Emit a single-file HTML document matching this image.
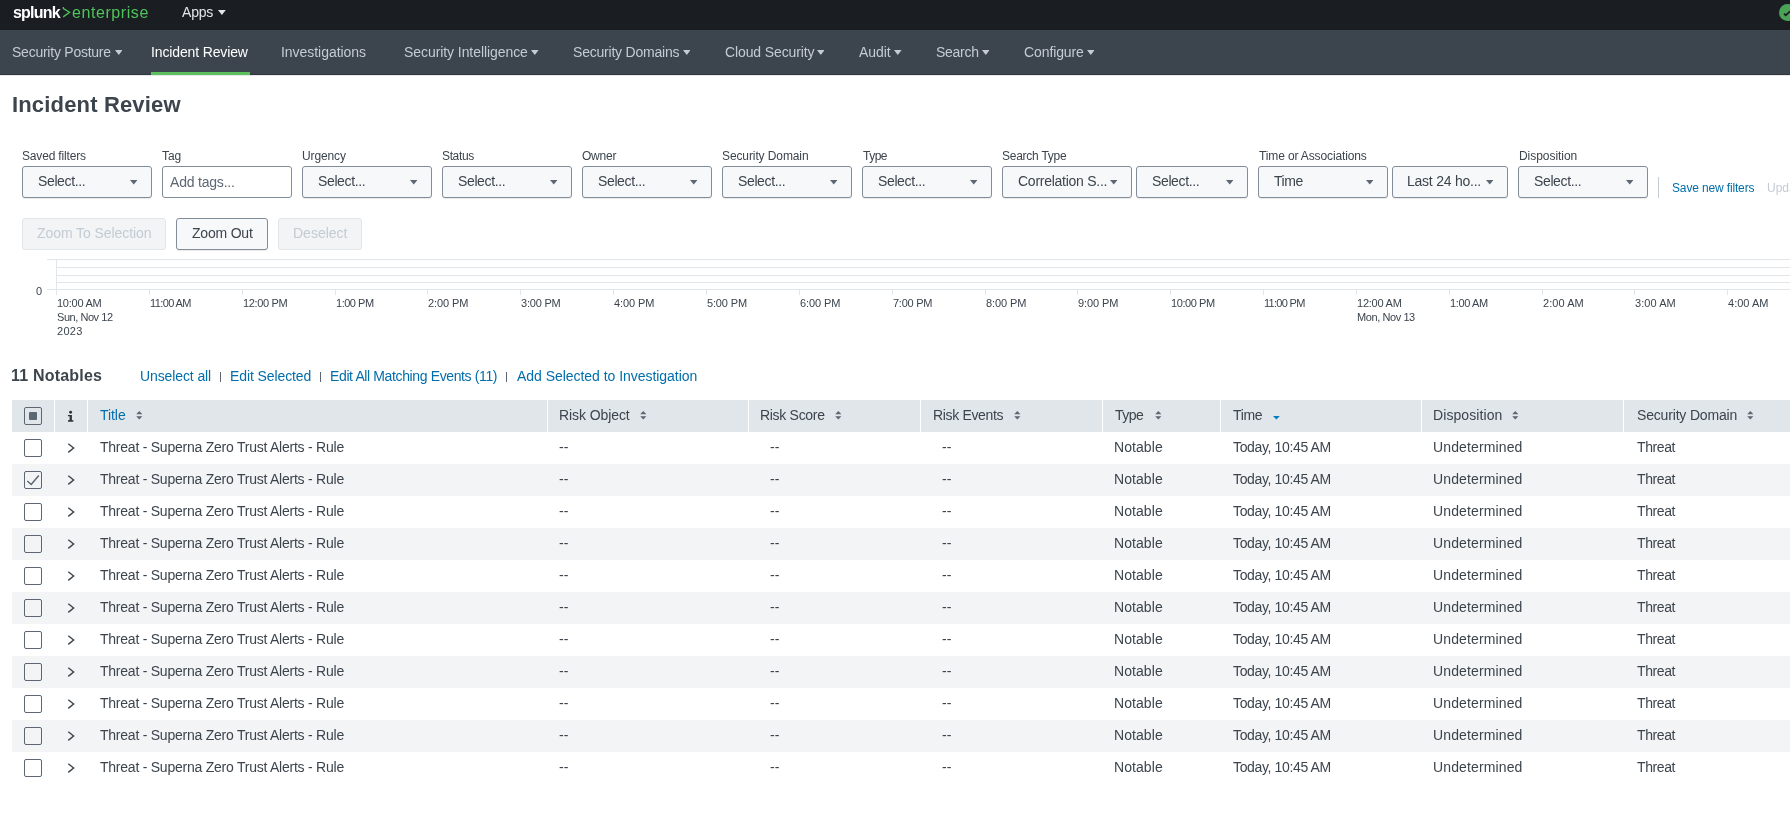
<!DOCTYPE html>
<html><head><meta charset="utf-8"><style>
html,body{margin:0;padding:0;width:1790px;height:838px;overflow:hidden;background:#ffffff;}
body{position:relative;font-family:"Liberation Sans",sans-serif;}
.t{position:absolute;white-space:nowrap;-webkit-font-smoothing:antialiased;will-change:transform;}
.r{position:absolute;box-sizing:content-box;}
</style></head><body>
<div class="r" style="left:0px;top:0px;width:1790px;height:30px;background:#1a1e22"></div>
<div class="t" style="left:12.90px;top:5px;font-size:16px;line-height:16px;color:#ffffff;font-weight:700;letter-spacing:-0.793px;">splunk</div>
<svg class="r" style="left:60px;top:4px" width="14" height="16" viewBox="60 4 14 16"><path d="M63.4 7 L63.4 8.6 L69.6 12.3 L63.2 16.9" stroke="#4fc35a" stroke-width="1.3" fill="none"/></svg>
<div class="t" style="left:71.60px;top:5px;font-size:16px;line-height:16px;color:#4fc35a;font-weight:400;letter-spacing:0.572px;">enterprise</div>
<div class="t" style="left:181.90px;top:5px;font-size:14px;line-height:14px;color:#e1e6eb;font-weight:400;letter-spacing:-0.203px;">Apps</div>
<svg class="r" style="left:218.3px;top:10px" width="7.8" height="5" viewBox="0 0 7.8 5"><path d="M0 0 L7.8 0 L3.9 5 Z" fill="#e1e6eb"/></svg>
<div class="r" style="left:1779px;top:4px;width:17px;height:17px;border-radius:50%;background:#4aa356"></div>
<svg class="r" style="left:1780px;top:8px" width="10" height="10" viewBox="1780 8 10 10"><path d="M1784 13.6 L1785.8 15.3 L1790 11.3" stroke="#1a1c20" stroke-width="1.8" fill="none"/></svg>
<div class="r" style="left:0px;top:30px;width:1790px;height:45px;background:#3c444d"></div>
<div class="r" style="left:0px;top:74px;width:1790px;height:1px;background:#2f363e"></div>
<div class="r" style="left:0px;top:75px;width:1790px;height:1px;background:#e6e8ea"></div>
<div class="t" style="left:12.20px;top:45px;font-size:14px;line-height:14px;color:#c3cbd4;font-weight:400;letter-spacing:-0.242px;">Security Posture</div>
<svg class="r" style="left:114.8px;top:50px" width="7.6" height="5" viewBox="0 0 7.6 5"><path d="M0 0 L7.6 0 L3.8 5 Z" fill="#c3cbd4"/></svg>
<div class="t" style="left:150.70px;top:45px;font-size:14px;line-height:14px;color:#ffffff;font-weight:400;letter-spacing:-0.137px;">Incident Review</div>
<div class="t" style="left:280.60px;top:45px;font-size:14px;line-height:14px;color:#c3cbd4;font-weight:400;letter-spacing:-0.039px;">Investigations</div>
<div class="t" style="left:403.90px;top:45px;font-size:14px;line-height:14px;color:#c3cbd4;font-weight:400;letter-spacing:-0.070px;">Security Intelligence</div>
<svg class="r" style="left:531px;top:50px" width="7.6" height="5" viewBox="0 0 7.6 5"><path d="M0 0 L7.6 0 L3.8 5 Z" fill="#c3cbd4"/></svg>
<div class="t" style="left:573.00px;top:45px;font-size:14px;line-height:14px;color:#c3cbd4;font-weight:400;letter-spacing:-0.207px;">Security Domains</div>
<svg class="r" style="left:682.7px;top:50px" width="7.6" height="5" viewBox="0 0 7.6 5"><path d="M0 0 L7.6 0 L3.8 5 Z" fill="#c3cbd4"/></svg>
<div class="t" style="left:724.80px;top:45px;font-size:14px;line-height:14px;color:#c3cbd4;font-weight:400;letter-spacing:-0.119px;">Cloud Security</div>
<svg class="r" style="left:816.7px;top:50px" width="7.6" height="5" viewBox="0 0 7.6 5"><path d="M0 0 L7.6 0 L3.8 5 Z" fill="#c3cbd4"/></svg>
<div class="t" style="left:859.30px;top:45px;font-size:14px;line-height:14px;color:#c3cbd4;font-weight:400;letter-spacing:-0.080px;">Audit</div>
<svg class="r" style="left:894px;top:50px" width="7.6" height="5" viewBox="0 0 7.6 5"><path d="M0 0 L7.6 0 L3.8 5 Z" fill="#c3cbd4"/></svg>
<div class="t" style="left:936.10px;top:45px;font-size:14px;line-height:14px;color:#c3cbd4;font-weight:400;letter-spacing:-0.274px;">Search</div>
<svg class="r" style="left:981.5px;top:50px" width="7.6" height="5" viewBox="0 0 7.6 5"><path d="M0 0 L7.6 0 L3.8 5 Z" fill="#c3cbd4"/></svg>
<div class="t" style="left:1023.80px;top:45px;font-size:14px;line-height:14px;color:#c3cbd4;font-weight:400;letter-spacing:-0.102px;">Configure</div>
<svg class="r" style="left:1086.9px;top:50px" width="7.6" height="5" viewBox="0 0 7.6 5"><path d="M0 0 L7.6 0 L3.8 5 Z" fill="#c3cbd4"/></svg>
<div class="r" style="left:151px;top:72px;width:99px;height:3px;background:#5cc05c"></div>
<div class="t" style="left:11.60px;top:94px;font-size:22px;line-height:22px;color:#3c444d;font-weight:700;letter-spacing:0.160px;">Incident Review</div>
<div class="t" style="left:22.30px;top:150px;font-size:12px;line-height:12px;color:#3c444d;font-weight:400;letter-spacing:-0.169px;">Saved filters</div>
<div class="t" style="left:162.10px;top:150px;font-size:12px;line-height:12px;color:#3c444d;font-weight:400;letter-spacing:-0.037px;">Tag</div>
<div class="t" style="left:302.10px;top:150px;font-size:12px;line-height:12px;color:#3c444d;font-weight:400;letter-spacing:-0.114px;">Urgency</div>
<div class="t" style="left:442.00px;top:150px;font-size:12px;line-height:12px;color:#3c444d;font-weight:400;letter-spacing:-0.364px;">Status</div>
<div class="t" style="left:582.40px;top:150px;font-size:12px;line-height:12px;color:#3c444d;font-weight:400;letter-spacing:-0.237px;">Owner</div>
<div class="t" style="left:721.90px;top:150px;font-size:12px;line-height:12px;color:#3c444d;font-weight:400;letter-spacing:-0.104px;">Security Domain</div>
<div class="t" style="left:862.60px;top:150px;font-size:12px;line-height:12px;color:#3c444d;font-weight:400;letter-spacing:-0.514px;">Type</div>
<div class="t" style="left:1002.30px;top:150px;font-size:12px;line-height:12px;color:#3c444d;font-weight:400;letter-spacing:-0.250px;">Search Type</div>
<div class="t" style="left:1258.80px;top:150px;font-size:12px;line-height:12px;color:#3c444d;font-weight:400;letter-spacing:-0.128px;">Time or Associations</div>
<div class="t" style="left:1518.90px;top:150px;font-size:12px;line-height:12px;color:#3c444d;font-weight:400;letter-spacing:-0.042px;">Disposition</div>
<div class="r" style="left:22px;top:166px;width:128px;height:30px;background:#f7f8fa;border:1px solid #818d99;border-radius:3px;box-shadow:0 1px 0 rgba(0,0,0,0.08)"></div>
<div class="t" style="left:37.50px;top:174px;font-size:14px;line-height:14px;color:#3c444d;font-weight:400;letter-spacing:-0.374px;">Select...</div>
<svg class="r" style="left:129.7px;top:180px" width="7.5" height="4.6" viewBox="0 0 7.5 4.6"><path d="M0 0 L7.5 0 L3.75 4.6 Z" fill="#5c6773"/></svg>
<div class="r" style="left:302px;top:166px;width:128px;height:30px;background:#f7f8fa;border:1px solid #818d99;border-radius:3px;box-shadow:0 1px 0 rgba(0,0,0,0.08)"></div>
<div class="t" style="left:317.50px;top:174px;font-size:14px;line-height:14px;color:#3c444d;font-weight:400;letter-spacing:-0.374px;">Select...</div>
<svg class="r" style="left:409.7px;top:180px" width="7.5" height="4.6" viewBox="0 0 7.5 4.6"><path d="M0 0 L7.5 0 L3.75 4.6 Z" fill="#5c6773"/></svg>
<div class="r" style="left:442px;top:166px;width:128px;height:30px;background:#f7f8fa;border:1px solid #818d99;border-radius:3px;box-shadow:0 1px 0 rgba(0,0,0,0.08)"></div>
<div class="t" style="left:457.50px;top:174px;font-size:14px;line-height:14px;color:#3c444d;font-weight:400;letter-spacing:-0.374px;">Select...</div>
<svg class="r" style="left:549.7px;top:180px" width="7.5" height="4.6" viewBox="0 0 7.5 4.6"><path d="M0 0 L7.5 0 L3.75 4.6 Z" fill="#5c6773"/></svg>
<div class="r" style="left:582px;top:166px;width:128px;height:30px;background:#f7f8fa;border:1px solid #818d99;border-radius:3px;box-shadow:0 1px 0 rgba(0,0,0,0.08)"></div>
<div class="t" style="left:597.50px;top:174px;font-size:14px;line-height:14px;color:#3c444d;font-weight:400;letter-spacing:-0.374px;">Select...</div>
<svg class="r" style="left:689.7px;top:180px" width="7.5" height="4.6" viewBox="0 0 7.5 4.6"><path d="M0 0 L7.5 0 L3.75 4.6 Z" fill="#5c6773"/></svg>
<div class="r" style="left:722px;top:166px;width:128px;height:30px;background:#f7f8fa;border:1px solid #818d99;border-radius:3px;box-shadow:0 1px 0 rgba(0,0,0,0.08)"></div>
<div class="t" style="left:737.50px;top:174px;font-size:14px;line-height:14px;color:#3c444d;font-weight:400;letter-spacing:-0.374px;">Select...</div>
<svg class="r" style="left:829.7px;top:180px" width="7.5" height="4.6" viewBox="0 0 7.5 4.6"><path d="M0 0 L7.5 0 L3.75 4.6 Z" fill="#5c6773"/></svg>
<div class="r" style="left:862px;top:166px;width:128px;height:30px;background:#f7f8fa;border:1px solid #818d99;border-radius:3px;box-shadow:0 1px 0 rgba(0,0,0,0.08)"></div>
<div class="t" style="left:877.50px;top:174px;font-size:14px;line-height:14px;color:#3c444d;font-weight:400;letter-spacing:-0.374px;">Select...</div>
<svg class="r" style="left:969.7px;top:180px" width="7.5" height="4.6" viewBox="0 0 7.5 4.6"><path d="M0 0 L7.5 0 L3.75 4.6 Z" fill="#5c6773"/></svg>
<div class="r" style="left:1002px;top:166px;width:128px;height:30px;background:#f7f8fa;border:1px solid #818d99;border-radius:3px;box-shadow:0 1px 0 rgba(0,0,0,0.08)"></div>
<div class="t" style="left:1017.50px;top:174px;font-size:14px;line-height:14px;color:#3c444d;font-weight:400;letter-spacing:-0.259px;">Correlation S...</div>
<svg class="r" style="left:1109.7px;top:180px" width="7.5" height="4.6" viewBox="0 0 7.5 4.6"><path d="M0 0 L7.5 0 L3.75 4.6 Z" fill="#5c6773"/></svg>
<div class="r" style="left:1136px;top:166px;width:110px;height:30px;background:#f7f8fa;border:1px solid #818d99;border-radius:3px;box-shadow:0 1px 0 rgba(0,0,0,0.08)"></div>
<div class="t" style="left:1151.50px;top:174px;font-size:14px;line-height:14px;color:#3c444d;font-weight:400;letter-spacing:-0.374px;">Select...</div>
<svg class="r" style="left:1225.7px;top:180px" width="7.5" height="4.6" viewBox="0 0 7.5 4.6"><path d="M0 0 L7.5 0 L3.75 4.6 Z" fill="#5c6773"/></svg>
<div class="r" style="left:1258px;top:166px;width:128px;height:30px;background:#f7f8fa;border:1px solid #818d99;border-radius:3px;box-shadow:0 1px 0 rgba(0,0,0,0.08)"></div>
<div class="t" style="left:1273.50px;top:174px;font-size:14px;line-height:14px;color:#3c444d;font-weight:400;letter-spacing:-0.435px;">Time</div>
<svg class="r" style="left:1365.7px;top:180px" width="7.5" height="4.6" viewBox="0 0 7.5 4.6"><path d="M0 0 L7.5 0 L3.75 4.6 Z" fill="#5c6773"/></svg>
<div class="r" style="left:1392px;top:166px;width:114px;height:30px;background:#f7f8fa;border:1px solid #818d99;border-radius:3px;box-shadow:0 1px 0 rgba(0,0,0,0.08)"></div>
<div class="t" style="left:1406.50px;top:174px;font-size:14px;line-height:14px;color:#3c444d;font-weight:400;letter-spacing:-0.239px;">Last 24 ho...</div>
<svg class="r" style="left:1485.7px;top:180px" width="7.5" height="4.6" viewBox="0 0 7.5 4.6"><path d="M0 0 L7.5 0 L3.75 4.6 Z" fill="#5c6773"/></svg>
<div class="r" style="left:1518px;top:166px;width:128px;height:30px;background:#f7f8fa;border:1px solid #818d99;border-radius:3px;box-shadow:0 1px 0 rgba(0,0,0,0.08)"></div>
<div class="t" style="left:1533.50px;top:174px;font-size:14px;line-height:14px;color:#3c444d;font-weight:400;letter-spacing:-0.374px;">Select...</div>
<svg class="r" style="left:1625.7px;top:180px" width="7.5" height="4.6" viewBox="0 0 7.5 4.6"><path d="M0 0 L7.5 0 L3.75 4.6 Z" fill="#5c6773"/></svg>
<div class="r" style="left:162px;top:166px;width:128px;height:30px;background:#ffffff;border:1px solid #818d99;border-radius:3px"></div>
<div class="t" style="left:170.20px;top:175px;font-size:14px;line-height:14px;color:#5c6773;font-weight:400;letter-spacing:-0.204px;">Add tags...</div>
<div class="r" style="left:1658px;top:177px;width:1px;height:21px;background:#c3cbd4"></div>
<div class="t" style="left:1671.70px;top:182px;font-size:12px;line-height:12px;color:#006eaa;font-weight:400;letter-spacing:-0.147px;">Save new filters</div>
<div class="t" style="left:1767.00px;top:182px;font-size:12px;line-height:12px;color:#c3cbd4;font-weight:400;">Update</div>
<div class="r" style="left:22px;top:218px;width:142px;height:30px;background:#f2f4f5;border:1px solid #e1e6eb;border-radius:3px"></div>
<div class="t" style="left:36.90px;top:226px;font-size:14px;line-height:14px;color:#c3cbd4;font-weight:400;letter-spacing:-0.072px;">Zoom To Selection</div>
<div class="r" style="left:176px;top:218px;width:90px;height:30px;background:#f7f8fa;border:1px solid #818d99;border-radius:3px;box-shadow:0 1px 0 rgba(0,0,0,0.08)"></div>
<div class="t" style="left:191.80px;top:226px;font-size:14px;line-height:14px;color:#3c444d;font-weight:400;letter-spacing:-0.207px;">Zoom Out</div>
<div class="r" style="left:278px;top:218px;width:82px;height:30px;background:#f2f4f5;border:1px solid #e1e6eb;border-radius:3px"></div>
<div class="t" style="left:292.50px;top:226px;font-size:14px;line-height:14px;color:#c3cbd4;font-weight:400;letter-spacing:0.003px;">Deselect</div>
<div class="r" style="left:47px;top:259px;width:1743px;height:1px;background:#e1e6eb"></div>
<div class="r" style="left:56px;top:267px;width:1734px;height:1px;background:#e1e6eb"></div>
<div class="r" style="left:56px;top:275px;width:1734px;height:1px;background:#e1e6eb"></div>
<div class="r" style="left:56px;top:282px;width:1734px;height:1px;background:#e1e6eb"></div>
<div class="r" style="left:47px;top:289px;width:1743px;height:1px;background:#e1e6eb"></div>
<div class="r" style="left:56px;top:259px;width:1px;height:36px;background:#e1e6eb"></div>
<div class="t" style="left:35.60px;top:286px;font-size:11px;line-height:11px;color:#3c444d;font-weight:400;">0</div>
<div class="t" style="left:57.00px;top:298px;font-size:11px;line-height:11px;color:#3c444d;font-weight:400;letter-spacing:-0.246px;">10:00 AM</div>
<div class="r" style="left:149px;top:289px;width:1px;height:6px;background:#e1e6eb"></div>
<div class="t" style="left:149.80px;top:298px;font-size:11px;line-height:11px;color:#3c444d;font-weight:400;letter-spacing:-0.601px;">11:00 AM</div>
<div class="r" style="left:242px;top:289px;width:1px;height:6px;background:#e1e6eb"></div>
<div class="t" style="left:242.70px;top:298px;font-size:11px;line-height:11px;color:#3c444d;font-weight:400;letter-spacing:-0.331px;">12:00 PM</div>
<div class="r" style="left:335px;top:289px;width:1px;height:6px;background:#e1e6eb"></div>
<div class="t" style="left:335.50px;top:298px;font-size:11px;line-height:11px;color:#3c444d;font-weight:400;letter-spacing:-0.484px;">1:00 PM</div>
<div class="r" style="left:427px;top:289px;width:1px;height:6px;background:#e1e6eb"></div>
<div class="t" style="left:428.40px;top:298px;font-size:11px;line-height:11px;color:#3c444d;font-weight:400;letter-spacing:-0.100px;">2:00 PM</div>
<div class="r" style="left:520px;top:289px;width:1px;height:6px;background:#e1e6eb"></div>
<div class="t" style="left:521.20px;top:298px;font-size:11px;line-height:11px;color:#3c444d;font-weight:400;letter-spacing:-0.200px;">3:00 PM</div>
<div class="r" style="left:613px;top:289px;width:1px;height:6px;background:#e1e6eb"></div>
<div class="t" style="left:614.10px;top:298px;font-size:11px;line-height:11px;color:#3c444d;font-weight:400;letter-spacing:-0.100px;">4:00 PM</div>
<div class="r" style="left:706px;top:289px;width:1px;height:6px;background:#e1e6eb"></div>
<div class="t" style="left:706.90px;top:298px;font-size:11px;line-height:11px;color:#3c444d;font-weight:400;letter-spacing:-0.150px;">5:00 PM</div>
<div class="r" style="left:799px;top:289px;width:1px;height:6px;background:#e1e6eb"></div>
<div class="t" style="left:799.80px;top:298px;font-size:11px;line-height:11px;color:#3c444d;font-weight:400;letter-spacing:-0.100px;">6:00 PM</div>
<div class="r" style="left:892px;top:289px;width:1px;height:6px;background:#e1e6eb"></div>
<div class="t" style="left:892.60px;top:298px;font-size:11px;line-height:11px;color:#3c444d;font-weight:400;letter-spacing:-0.267px;">7:00 PM</div>
<div class="r" style="left:985px;top:289px;width:1px;height:6px;background:#e1e6eb"></div>
<div class="t" style="left:985.50px;top:298px;font-size:11px;line-height:11px;color:#3c444d;font-weight:400;letter-spacing:-0.100px;">8:00 PM</div>
<div class="r" style="left:1077px;top:289px;width:1px;height:6px;background:#e1e6eb"></div>
<div class="t" style="left:1078.30px;top:298px;font-size:11px;line-height:11px;color:#3c444d;font-weight:400;letter-spacing:-0.100px;">9:00 PM</div>
<div class="r" style="left:1170px;top:289px;width:1px;height:6px;background:#e1e6eb"></div>
<div class="t" style="left:1171.20px;top:298px;font-size:11px;line-height:11px;color:#3c444d;font-weight:400;letter-spacing:-0.417px;">10:00 PM</div>
<div class="r" style="left:1263px;top:289px;width:1px;height:6px;background:#e1e6eb"></div>
<div class="t" style="left:1264.00px;top:298px;font-size:11px;line-height:11px;color:#3c444d;font-weight:400;letter-spacing:-0.701px;">11:00 PM</div>
<div class="r" style="left:1356px;top:289px;width:1px;height:6px;background:#e1e6eb"></div>
<div class="t" style="left:1356.90px;top:298px;font-size:11px;line-height:11px;color:#3c444d;font-weight:400;letter-spacing:-0.231px;">12:00 AM</div>
<div class="r" style="left:1449px;top:289px;width:1px;height:6px;background:#e1e6eb"></div>
<div class="t" style="left:1449.80px;top:298px;font-size:11px;line-height:11px;color:#3c444d;font-weight:400;letter-spacing:-0.367px;">1:00 AM</div>
<div class="r" style="left:1542px;top:289px;width:1px;height:6px;background:#e1e6eb"></div>
<div class="t" style="left:1542.60px;top:298px;font-size:11px;line-height:11px;color:#3c444d;font-weight:400;letter-spacing:0.066px;">2:00 AM</div>
<div class="r" style="left:1634px;top:289px;width:1px;height:6px;background:#e1e6eb"></div>
<div class="t" style="left:1635.40px;top:298px;font-size:11px;line-height:11px;color:#3c444d;font-weight:400;letter-spacing:0.066px;">3:00 AM</div>
<div class="r" style="left:1727px;top:289px;width:1px;height:6px;background:#e1e6eb"></div>
<div class="t" style="left:1728.30px;top:298px;font-size:11px;line-height:11px;color:#3c444d;font-weight:400;letter-spacing:0.016px;">4:00 AM</div>
<div class="t" style="left:57.00px;top:312px;font-size:11px;line-height:11px;color:#3c444d;font-weight:400;letter-spacing:-0.452px;">Sun, Nov 12</div>
<div class="t" style="left:57.00px;top:326px;font-size:11px;line-height:11px;color:#3c444d;font-weight:400;letter-spacing:0.316px;">2023</div>
<div class="t" style="left:1357.00px;top:312px;font-size:11px;line-height:11px;color:#3c444d;font-weight:400;letter-spacing:-0.415px;">Mon, Nov 13</div>
<div class="t" style="left:10.70px;top:368px;font-size:16px;line-height:16px;color:#3c444d;font-weight:700;letter-spacing:0.197px;">11 Notables</div>
<div class="t" style="left:139.60px;top:369px;font-size:14px;line-height:14px;color:#006eaa;font-weight:400;letter-spacing:-0.105px;">Unselect all</div>
<div class="t" style="left:229.90px;top:369px;font-size:14px;line-height:14px;color:#006eaa;font-weight:400;letter-spacing:-0.101px;">Edit Selected</div>
<div class="t" style="left:329.50px;top:369px;font-size:14px;line-height:14px;color:#006eaa;font-weight:400;letter-spacing:-0.373px;">Edit All Matching Events (11)</div>
<div class="t" style="left:517.00px;top:369px;font-size:14px;line-height:14px;color:#006eaa;font-weight:400;letter-spacing:-0.038px;">Add Selected to Investigation</div>
<div class="r" style="left:220px;top:372px;width:1px;height:10px;background:#5c6773"></div>
<div class="r" style="left:320px;top:372px;width:1px;height:10px;background:#5c6773"></div>
<div class="r" style="left:506px;top:372px;width:1px;height:10px;background:#5c6773"></div>
<div class="r" style="left:12px;top:400px;width:1778px;height:32px;background:#e1e6eb"></div>
<div class="r" style="left:54px;top:400px;width:1px;height:32px;background:#ffffff"></div>
<div class="r" style="left:87px;top:400px;width:1px;height:32px;background:#ffffff"></div>
<div class="r" style="left:547px;top:400px;width:1px;height:32px;background:#ffffff"></div>
<div class="r" style="left:748px;top:400px;width:1px;height:32px;background:#ffffff"></div>
<div class="r" style="left:920px;top:400px;width:1px;height:32px;background:#ffffff"></div>
<div class="r" style="left:1102px;top:400px;width:1px;height:32px;background:#ffffff"></div>
<div class="r" style="left:1220px;top:400px;width:1px;height:32px;background:#ffffff"></div>
<div class="r" style="left:1421px;top:400px;width:1px;height:32px;background:#ffffff"></div>
<div class="r" style="left:1623px;top:400px;width:1px;height:32px;background:#ffffff"></div>
<div class="r" style="left:24px;top:407px;width:16px;height:16px;border:1px solid #5c6773;border-radius:2px"></div>
<div class="r" style="left:29px;top:412px;width:8px;height:8px;background:#5c6773;border-radius:1px"></div>
<svg class="r" style="left:66px;top:409px" width="10" height="15" viewBox="66 409 10 15"><circle cx="70.6" cy="412.3" r="1.45" fill="#2e343a"/><path d="M67.9 415.1 L71.9 414.9 L71.9 420.1 L73.6 420.4 L73.1 421.8 L68 421.8 L68 420.3 L69.6 420.1 L69.6 416.3 L67.9 416.2 Z" fill="#2e343a"/></svg>
<div class="t" style="left:100.10px;top:408px;font-size:14px;line-height:14px;color:#006eaa;font-weight:400;letter-spacing:-0.061px;">Title</div>
<svg class="r" style="left:136px;top:411px" width="7" height="9" viewBox="0 0 7 9"><path d="M0.2 3.3 L3.3 0 L6.4 3.3 Z M0.2 5.3 L6.4 5.3 L3.3 8.5 Z" fill="#5c6773"/></svg>
<div class="t" style="left:558.80px;top:408px;font-size:14px;line-height:14px;color:#3c444d;font-weight:400;letter-spacing:-0.088px;">Risk Object</div>
<svg class="r" style="left:640px;top:411px" width="7" height="9" viewBox="0 0 7 9"><path d="M0.2 3.3 L3.3 0 L6.4 3.3 Z M0.2 5.3 L6.4 5.3 L3.3 8.5 Z" fill="#5c6773"/></svg>
<div class="t" style="left:759.90px;top:408px;font-size:14px;line-height:14px;color:#3c444d;font-weight:400;letter-spacing:-0.300px;">Risk Score</div>
<svg class="r" style="left:834.9px;top:411px" width="7" height="9" viewBox="0 0 7 9"><path d="M0.2 3.3 L3.3 0 L6.4 3.3 Z M0.2 5.3 L6.4 5.3 L3.3 8.5 Z" fill="#5c6773"/></svg>
<div class="t" style="left:932.50px;top:408px;font-size:14px;line-height:14px;color:#3c444d;font-weight:400;letter-spacing:-0.341px;">Risk Events</div>
<svg class="r" style="left:1013.7px;top:411px" width="7" height="9" viewBox="0 0 7 9"><path d="M0.2 3.3 L3.3 0 L6.4 3.3 Z M0.2 5.3 L6.4 5.3 L3.3 8.5 Z" fill="#5c6773"/></svg>
<div class="t" style="left:1115.40px;top:408px;font-size:14px;line-height:14px;color:#3c444d;font-weight:400;letter-spacing:-0.555px;">Type</div>
<svg class="r" style="left:1155px;top:411px" width="7" height="9" viewBox="0 0 7 9"><path d="M0.2 3.3 L3.3 0 L6.4 3.3 Z M0.2 5.3 L6.4 5.3 L3.3 8.5 Z" fill="#5c6773"/></svg>
<div class="t" style="left:1233.20px;top:408px;font-size:14px;line-height:14px;color:#3c444d;font-weight:400;letter-spacing:-0.368px;">Time</div>
<div class="t" style="left:1433.20px;top:408px;font-size:14px;line-height:14px;color:#3c444d;font-weight:400;letter-spacing:0.081px;">Disposition</div>
<svg class="r" style="left:1511.7px;top:411px" width="7" height="9" viewBox="0 0 7 9"><path d="M0.2 3.3 L3.3 0 L6.4 3.3 Z M0.2 5.3 L6.4 5.3 L3.3 8.5 Z" fill="#5c6773"/></svg>
<div class="t" style="left:1636.60px;top:408px;font-size:14px;line-height:14px;color:#3c444d;font-weight:400;letter-spacing:-0.173px;">Security Domain</div>
<svg class="r" style="left:1746.9px;top:411px" width="7" height="9" viewBox="0 0 7 9"><path d="M0.2 3.3 L3.3 0 L6.4 3.3 Z M0.2 5.3 L6.4 5.3 L3.3 8.5 Z" fill="#5c6773"/></svg>
<svg class="r" style="left:1272.9px;top:416px" width="6.8" height="3.6" viewBox="0 0 6.8 3.6"><path d="M0 0 L6.8 0 L3.4 3.6 Z" fill="#007abd"/></svg>
<div class="r" style="left:24px;top:439px;width:16px;height:16px;border:1px solid #5c6773;border-radius:2px"></div>
<svg class="r" style="left:67px;top:443px" width="9" height="12" viewBox="0 0 9 12"><path d="M1.3 0.8 L6.6 5 L1.3 9.4" stroke="#3c444d" stroke-width="1.4" fill="none"/></svg>
<div class="t" style="left:99.90px;top:440px;font-size:14px;line-height:14px;color:#3c444d;font-weight:400;letter-spacing:-0.237px;">Threat - Superna Zero Trust Alerts - Rule</div>
<div class="t" style="left:559.10px;top:440px;font-size:14px;line-height:14px;color:#3c444d;font-weight:400;">--</div>
<div class="t" style="left:770.00px;top:440px;font-size:14px;line-height:14px;color:#3c444d;font-weight:400;">--</div>
<div class="t" style="left:942.00px;top:440px;font-size:14px;line-height:14px;color:#3c444d;font-weight:400;">--</div>
<div class="t" style="left:1113.60px;top:440px;font-size:14px;line-height:14px;color:#3c444d;font-weight:400;letter-spacing:0.072px;">Notable</div>
<div class="t" style="left:1233.00px;top:440px;font-size:14px;line-height:14px;color:#3c444d;font-weight:400;letter-spacing:-0.361px;">Today, 10:45 AM</div>
<div class="t" style="left:1432.80px;top:440px;font-size:14px;line-height:14px;color:#3c444d;font-weight:400;letter-spacing:0.132px;">Undetermined</div>
<div class="t" style="left:1636.60px;top:440px;font-size:14px;line-height:14px;color:#3c444d;font-weight:400;letter-spacing:-0.394px;">Threat</div>
<div class="r" style="left:12px;top:464px;width:1778px;height:32px;background:#f2f4f5"></div>
<div class="r" style="left:24px;top:471px;width:16px;height:16px;border:1px solid #5c6773;border-radius:2px"></div>
<svg class="r" style="left:24px;top:471px" width="18" height="18" viewBox="0 0 18 18"><path d="M3.3 10 L7.2 13.5 L14.8 4.5" stroke="#5c6773" stroke-width="1.5" fill="none"/></svg>
<svg class="r" style="left:67px;top:475px" width="9" height="12" viewBox="0 0 9 12"><path d="M1.3 0.8 L6.6 5 L1.3 9.4" stroke="#3c444d" stroke-width="1.4" fill="none"/></svg>
<div class="t" style="left:99.90px;top:472px;font-size:14px;line-height:14px;color:#3c444d;font-weight:400;letter-spacing:-0.237px;">Threat - Superna Zero Trust Alerts - Rule</div>
<div class="t" style="left:559.10px;top:472px;font-size:14px;line-height:14px;color:#3c444d;font-weight:400;">--</div>
<div class="t" style="left:770.00px;top:472px;font-size:14px;line-height:14px;color:#3c444d;font-weight:400;">--</div>
<div class="t" style="left:942.00px;top:472px;font-size:14px;line-height:14px;color:#3c444d;font-weight:400;">--</div>
<div class="t" style="left:1113.60px;top:472px;font-size:14px;line-height:14px;color:#3c444d;font-weight:400;letter-spacing:0.072px;">Notable</div>
<div class="t" style="left:1233.00px;top:472px;font-size:14px;line-height:14px;color:#3c444d;font-weight:400;letter-spacing:-0.361px;">Today, 10:45 AM</div>
<div class="t" style="left:1432.80px;top:472px;font-size:14px;line-height:14px;color:#3c444d;font-weight:400;letter-spacing:0.132px;">Undetermined</div>
<div class="t" style="left:1636.60px;top:472px;font-size:14px;line-height:14px;color:#3c444d;font-weight:400;letter-spacing:-0.394px;">Threat</div>
<div class="r" style="left:24px;top:503px;width:16px;height:16px;border:1px solid #5c6773;border-radius:2px"></div>
<svg class="r" style="left:67px;top:507px" width="9" height="12" viewBox="0 0 9 12"><path d="M1.3 0.8 L6.6 5 L1.3 9.4" stroke="#3c444d" stroke-width="1.4" fill="none"/></svg>
<div class="t" style="left:99.90px;top:504px;font-size:14px;line-height:14px;color:#3c444d;font-weight:400;letter-spacing:-0.237px;">Threat - Superna Zero Trust Alerts - Rule</div>
<div class="t" style="left:559.10px;top:504px;font-size:14px;line-height:14px;color:#3c444d;font-weight:400;">--</div>
<div class="t" style="left:770.00px;top:504px;font-size:14px;line-height:14px;color:#3c444d;font-weight:400;">--</div>
<div class="t" style="left:942.00px;top:504px;font-size:14px;line-height:14px;color:#3c444d;font-weight:400;">--</div>
<div class="t" style="left:1113.60px;top:504px;font-size:14px;line-height:14px;color:#3c444d;font-weight:400;letter-spacing:0.072px;">Notable</div>
<div class="t" style="left:1233.00px;top:504px;font-size:14px;line-height:14px;color:#3c444d;font-weight:400;letter-spacing:-0.361px;">Today, 10:45 AM</div>
<div class="t" style="left:1432.80px;top:504px;font-size:14px;line-height:14px;color:#3c444d;font-weight:400;letter-spacing:0.132px;">Undetermined</div>
<div class="t" style="left:1636.60px;top:504px;font-size:14px;line-height:14px;color:#3c444d;font-weight:400;letter-spacing:-0.394px;">Threat</div>
<div class="r" style="left:12px;top:528px;width:1778px;height:32px;background:#f2f4f5"></div>
<div class="r" style="left:24px;top:535px;width:16px;height:16px;border:1px solid #5c6773;border-radius:2px"></div>
<svg class="r" style="left:67px;top:539px" width="9" height="12" viewBox="0 0 9 12"><path d="M1.3 0.8 L6.6 5 L1.3 9.4" stroke="#3c444d" stroke-width="1.4" fill="none"/></svg>
<div class="t" style="left:99.90px;top:536px;font-size:14px;line-height:14px;color:#3c444d;font-weight:400;letter-spacing:-0.237px;">Threat - Superna Zero Trust Alerts - Rule</div>
<div class="t" style="left:559.10px;top:536px;font-size:14px;line-height:14px;color:#3c444d;font-weight:400;">--</div>
<div class="t" style="left:770.00px;top:536px;font-size:14px;line-height:14px;color:#3c444d;font-weight:400;">--</div>
<div class="t" style="left:942.00px;top:536px;font-size:14px;line-height:14px;color:#3c444d;font-weight:400;">--</div>
<div class="t" style="left:1113.60px;top:536px;font-size:14px;line-height:14px;color:#3c444d;font-weight:400;letter-spacing:0.072px;">Notable</div>
<div class="t" style="left:1233.00px;top:536px;font-size:14px;line-height:14px;color:#3c444d;font-weight:400;letter-spacing:-0.361px;">Today, 10:45 AM</div>
<div class="t" style="left:1432.80px;top:536px;font-size:14px;line-height:14px;color:#3c444d;font-weight:400;letter-spacing:0.132px;">Undetermined</div>
<div class="t" style="left:1636.60px;top:536px;font-size:14px;line-height:14px;color:#3c444d;font-weight:400;letter-spacing:-0.394px;">Threat</div>
<div class="r" style="left:24px;top:567px;width:16px;height:16px;border:1px solid #5c6773;border-radius:2px"></div>
<svg class="r" style="left:67px;top:571px" width="9" height="12" viewBox="0 0 9 12"><path d="M1.3 0.8 L6.6 5 L1.3 9.4" stroke="#3c444d" stroke-width="1.4" fill="none"/></svg>
<div class="t" style="left:99.90px;top:568px;font-size:14px;line-height:14px;color:#3c444d;font-weight:400;letter-spacing:-0.237px;">Threat - Superna Zero Trust Alerts - Rule</div>
<div class="t" style="left:559.10px;top:568px;font-size:14px;line-height:14px;color:#3c444d;font-weight:400;">--</div>
<div class="t" style="left:770.00px;top:568px;font-size:14px;line-height:14px;color:#3c444d;font-weight:400;">--</div>
<div class="t" style="left:942.00px;top:568px;font-size:14px;line-height:14px;color:#3c444d;font-weight:400;">--</div>
<div class="t" style="left:1113.60px;top:568px;font-size:14px;line-height:14px;color:#3c444d;font-weight:400;letter-spacing:0.072px;">Notable</div>
<div class="t" style="left:1233.00px;top:568px;font-size:14px;line-height:14px;color:#3c444d;font-weight:400;letter-spacing:-0.361px;">Today, 10:45 AM</div>
<div class="t" style="left:1432.80px;top:568px;font-size:14px;line-height:14px;color:#3c444d;font-weight:400;letter-spacing:0.132px;">Undetermined</div>
<div class="t" style="left:1636.60px;top:568px;font-size:14px;line-height:14px;color:#3c444d;font-weight:400;letter-spacing:-0.394px;">Threat</div>
<div class="r" style="left:12px;top:592px;width:1778px;height:32px;background:#f2f4f5"></div>
<div class="r" style="left:24px;top:599px;width:16px;height:16px;border:1px solid #5c6773;border-radius:2px"></div>
<svg class="r" style="left:67px;top:603px" width="9" height="12" viewBox="0 0 9 12"><path d="M1.3 0.8 L6.6 5 L1.3 9.4" stroke="#3c444d" stroke-width="1.4" fill="none"/></svg>
<div class="t" style="left:99.90px;top:600px;font-size:14px;line-height:14px;color:#3c444d;font-weight:400;letter-spacing:-0.237px;">Threat - Superna Zero Trust Alerts - Rule</div>
<div class="t" style="left:559.10px;top:600px;font-size:14px;line-height:14px;color:#3c444d;font-weight:400;">--</div>
<div class="t" style="left:770.00px;top:600px;font-size:14px;line-height:14px;color:#3c444d;font-weight:400;">--</div>
<div class="t" style="left:942.00px;top:600px;font-size:14px;line-height:14px;color:#3c444d;font-weight:400;">--</div>
<div class="t" style="left:1113.60px;top:600px;font-size:14px;line-height:14px;color:#3c444d;font-weight:400;letter-spacing:0.072px;">Notable</div>
<div class="t" style="left:1233.00px;top:600px;font-size:14px;line-height:14px;color:#3c444d;font-weight:400;letter-spacing:-0.361px;">Today, 10:45 AM</div>
<div class="t" style="left:1432.80px;top:600px;font-size:14px;line-height:14px;color:#3c444d;font-weight:400;letter-spacing:0.132px;">Undetermined</div>
<div class="t" style="left:1636.60px;top:600px;font-size:14px;line-height:14px;color:#3c444d;font-weight:400;letter-spacing:-0.394px;">Threat</div>
<div class="r" style="left:24px;top:631px;width:16px;height:16px;border:1px solid #5c6773;border-radius:2px"></div>
<svg class="r" style="left:67px;top:635px" width="9" height="12" viewBox="0 0 9 12"><path d="M1.3 0.8 L6.6 5 L1.3 9.4" stroke="#3c444d" stroke-width="1.4" fill="none"/></svg>
<div class="t" style="left:99.90px;top:632px;font-size:14px;line-height:14px;color:#3c444d;font-weight:400;letter-spacing:-0.237px;">Threat - Superna Zero Trust Alerts - Rule</div>
<div class="t" style="left:559.10px;top:632px;font-size:14px;line-height:14px;color:#3c444d;font-weight:400;">--</div>
<div class="t" style="left:770.00px;top:632px;font-size:14px;line-height:14px;color:#3c444d;font-weight:400;">--</div>
<div class="t" style="left:942.00px;top:632px;font-size:14px;line-height:14px;color:#3c444d;font-weight:400;">--</div>
<div class="t" style="left:1113.60px;top:632px;font-size:14px;line-height:14px;color:#3c444d;font-weight:400;letter-spacing:0.072px;">Notable</div>
<div class="t" style="left:1233.00px;top:632px;font-size:14px;line-height:14px;color:#3c444d;font-weight:400;letter-spacing:-0.361px;">Today, 10:45 AM</div>
<div class="t" style="left:1432.80px;top:632px;font-size:14px;line-height:14px;color:#3c444d;font-weight:400;letter-spacing:0.132px;">Undetermined</div>
<div class="t" style="left:1636.60px;top:632px;font-size:14px;line-height:14px;color:#3c444d;font-weight:400;letter-spacing:-0.394px;">Threat</div>
<div class="r" style="left:12px;top:656px;width:1778px;height:32px;background:#f2f4f5"></div>
<div class="r" style="left:24px;top:663px;width:16px;height:16px;border:1px solid #5c6773;border-radius:2px"></div>
<svg class="r" style="left:67px;top:667px" width="9" height="12" viewBox="0 0 9 12"><path d="M1.3 0.8 L6.6 5 L1.3 9.4" stroke="#3c444d" stroke-width="1.4" fill="none"/></svg>
<div class="t" style="left:99.90px;top:664px;font-size:14px;line-height:14px;color:#3c444d;font-weight:400;letter-spacing:-0.237px;">Threat - Superna Zero Trust Alerts - Rule</div>
<div class="t" style="left:559.10px;top:664px;font-size:14px;line-height:14px;color:#3c444d;font-weight:400;">--</div>
<div class="t" style="left:770.00px;top:664px;font-size:14px;line-height:14px;color:#3c444d;font-weight:400;">--</div>
<div class="t" style="left:942.00px;top:664px;font-size:14px;line-height:14px;color:#3c444d;font-weight:400;">--</div>
<div class="t" style="left:1113.60px;top:664px;font-size:14px;line-height:14px;color:#3c444d;font-weight:400;letter-spacing:0.072px;">Notable</div>
<div class="t" style="left:1233.00px;top:664px;font-size:14px;line-height:14px;color:#3c444d;font-weight:400;letter-spacing:-0.361px;">Today, 10:45 AM</div>
<div class="t" style="left:1432.80px;top:664px;font-size:14px;line-height:14px;color:#3c444d;font-weight:400;letter-spacing:0.132px;">Undetermined</div>
<div class="t" style="left:1636.60px;top:664px;font-size:14px;line-height:14px;color:#3c444d;font-weight:400;letter-spacing:-0.394px;">Threat</div>
<div class="r" style="left:24px;top:695px;width:16px;height:16px;border:1px solid #5c6773;border-radius:2px"></div>
<svg class="r" style="left:67px;top:699px" width="9" height="12" viewBox="0 0 9 12"><path d="M1.3 0.8 L6.6 5 L1.3 9.4" stroke="#3c444d" stroke-width="1.4" fill="none"/></svg>
<div class="t" style="left:99.90px;top:696px;font-size:14px;line-height:14px;color:#3c444d;font-weight:400;letter-spacing:-0.237px;">Threat - Superna Zero Trust Alerts - Rule</div>
<div class="t" style="left:559.10px;top:696px;font-size:14px;line-height:14px;color:#3c444d;font-weight:400;">--</div>
<div class="t" style="left:770.00px;top:696px;font-size:14px;line-height:14px;color:#3c444d;font-weight:400;">--</div>
<div class="t" style="left:942.00px;top:696px;font-size:14px;line-height:14px;color:#3c444d;font-weight:400;">--</div>
<div class="t" style="left:1113.60px;top:696px;font-size:14px;line-height:14px;color:#3c444d;font-weight:400;letter-spacing:0.072px;">Notable</div>
<div class="t" style="left:1233.00px;top:696px;font-size:14px;line-height:14px;color:#3c444d;font-weight:400;letter-spacing:-0.361px;">Today, 10:45 AM</div>
<div class="t" style="left:1432.80px;top:696px;font-size:14px;line-height:14px;color:#3c444d;font-weight:400;letter-spacing:0.132px;">Undetermined</div>
<div class="t" style="left:1636.60px;top:696px;font-size:14px;line-height:14px;color:#3c444d;font-weight:400;letter-spacing:-0.394px;">Threat</div>
<div class="r" style="left:12px;top:720px;width:1778px;height:32px;background:#f2f4f5"></div>
<div class="r" style="left:24px;top:727px;width:16px;height:16px;border:1px solid #5c6773;border-radius:2px"></div>
<svg class="r" style="left:67px;top:731px" width="9" height="12" viewBox="0 0 9 12"><path d="M1.3 0.8 L6.6 5 L1.3 9.4" stroke="#3c444d" stroke-width="1.4" fill="none"/></svg>
<div class="t" style="left:99.90px;top:728px;font-size:14px;line-height:14px;color:#3c444d;font-weight:400;letter-spacing:-0.237px;">Threat - Superna Zero Trust Alerts - Rule</div>
<div class="t" style="left:559.10px;top:728px;font-size:14px;line-height:14px;color:#3c444d;font-weight:400;">--</div>
<div class="t" style="left:770.00px;top:728px;font-size:14px;line-height:14px;color:#3c444d;font-weight:400;">--</div>
<div class="t" style="left:942.00px;top:728px;font-size:14px;line-height:14px;color:#3c444d;font-weight:400;">--</div>
<div class="t" style="left:1113.60px;top:728px;font-size:14px;line-height:14px;color:#3c444d;font-weight:400;letter-spacing:0.072px;">Notable</div>
<div class="t" style="left:1233.00px;top:728px;font-size:14px;line-height:14px;color:#3c444d;font-weight:400;letter-spacing:-0.361px;">Today, 10:45 AM</div>
<div class="t" style="left:1432.80px;top:728px;font-size:14px;line-height:14px;color:#3c444d;font-weight:400;letter-spacing:0.132px;">Undetermined</div>
<div class="t" style="left:1636.60px;top:728px;font-size:14px;line-height:14px;color:#3c444d;font-weight:400;letter-spacing:-0.394px;">Threat</div>
<div class="r" style="left:24px;top:759px;width:16px;height:16px;border:1px solid #5c6773;border-radius:2px"></div>
<svg class="r" style="left:67px;top:763px" width="9" height="12" viewBox="0 0 9 12"><path d="M1.3 0.8 L6.6 5 L1.3 9.4" stroke="#3c444d" stroke-width="1.4" fill="none"/></svg>
<div class="t" style="left:99.90px;top:760px;font-size:14px;line-height:14px;color:#3c444d;font-weight:400;letter-spacing:-0.237px;">Threat - Superna Zero Trust Alerts - Rule</div>
<div class="t" style="left:559.10px;top:760px;font-size:14px;line-height:14px;color:#3c444d;font-weight:400;">--</div>
<div class="t" style="left:770.00px;top:760px;font-size:14px;line-height:14px;color:#3c444d;font-weight:400;">--</div>
<div class="t" style="left:942.00px;top:760px;font-size:14px;line-height:14px;color:#3c444d;font-weight:400;">--</div>
<div class="t" style="left:1113.60px;top:760px;font-size:14px;line-height:14px;color:#3c444d;font-weight:400;letter-spacing:0.072px;">Notable</div>
<div class="t" style="left:1233.00px;top:760px;font-size:14px;line-height:14px;color:#3c444d;font-weight:400;letter-spacing:-0.361px;">Today, 10:45 AM</div>
<div class="t" style="left:1432.80px;top:760px;font-size:14px;line-height:14px;color:#3c444d;font-weight:400;letter-spacing:0.132px;">Undetermined</div>
<div class="t" style="left:1636.60px;top:760px;font-size:14px;line-height:14px;color:#3c444d;font-weight:400;letter-spacing:-0.394px;">Threat</div>
</body></html>
